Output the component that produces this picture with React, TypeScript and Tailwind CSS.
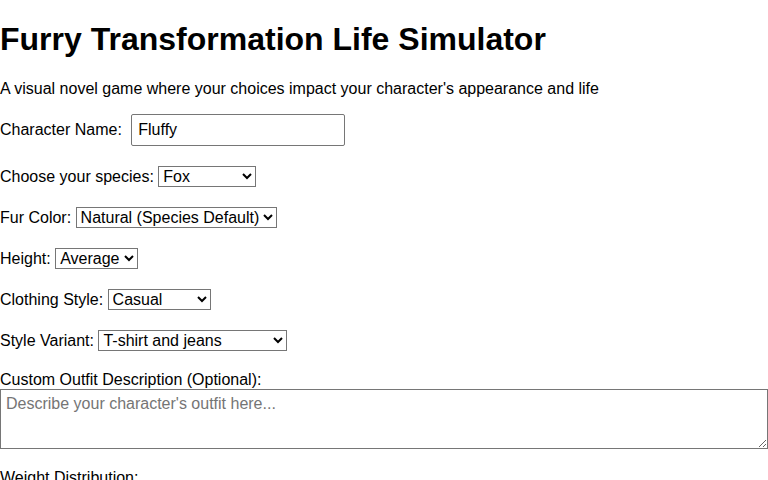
import React from "react";

export default function App() {
  return (
    <div className="font-['Liberation_Sans',Arial,sans-serif] leading-[normal] text-black bg-white text-[16px]">
      <h1 className="text-[32px] font-bold my-[21.44px]">Furry Transformation Life Simulator</h1>
      <p className="my-4">A visual novel game where your choices impact your character's appearance and life</p>

      <div className="mb-5">
        <label>Character Name: </label>
        <input
          type="text"
          defaultValue="Fluffy"
          className="ml-[5px] w-[214px] h-[32px] px-[6px] py-[6px] border border-[#767676] rounded-[2px] bg-white text-[16px]"
        />
      </div>

      <div className="mb-5">
        <label>Choose your species: </label>
        <select className="appearance-auto w-[98px] border border-[#767676] bg-white text-[16px]" defaultValue="Fox">
          <option>Fox</option>
          <option>Wolf</option>
          <option>Cat</option>
          <option>Rabbit</option>
          <option>Dragon</option>
        </select>
      </div>

      <div className="mb-5">
        <label>Fur Color: </label>
        <select className="appearance-auto w-[201px] border border-[#767676] bg-white text-[16px]">
          <option>Natural (Species Default)</option>
          <option>White</option>
          <option>Black</option>
        </select>
      </div>

      <div className="mb-5">
        <label>Height: </label>
        <select className="appearance-auto w-[83px] border border-[#767676] bg-white text-[16px]">
          <option>Average</option>
          <option>Short</option>
          <option>Tall</option>
        </select>
      </div>

      <div className="mb-5">
        <label>Clothing Style: </label>
        <select className="appearance-auto w-[103px] border border-[#767676] bg-white text-[16px]">
          <option>Casual</option>
          <option>Formal</option>
          <option>Sporty</option>
        </select>
      </div>

      <div className="mb-5">
        <label>Style Variant: </label>
        <select className="appearance-auto w-[189px] border border-[#767676] bg-white text-[16px]">
          <option>T-shirt and jeans</option>
          <option>Hoodie and sweatpants</option>
        </select>
      </div>

      <div className="mb-5">
        <label className="block">Custom Outfit Description (Optional):</label>
        <textarea
          placeholder="Describe your character's outfit here..."
          className="block w-full h-[60px] p-[5px] border border-[#767676] bg-white text-[16px] placeholder:text-[#757575]"
        />
      </div>

      <div className="mb-5">
        <label className="block">Weight Distribution:</label>
        <input type="range" className="appearance-auto" />
      </div>
    </div>
  );
}
